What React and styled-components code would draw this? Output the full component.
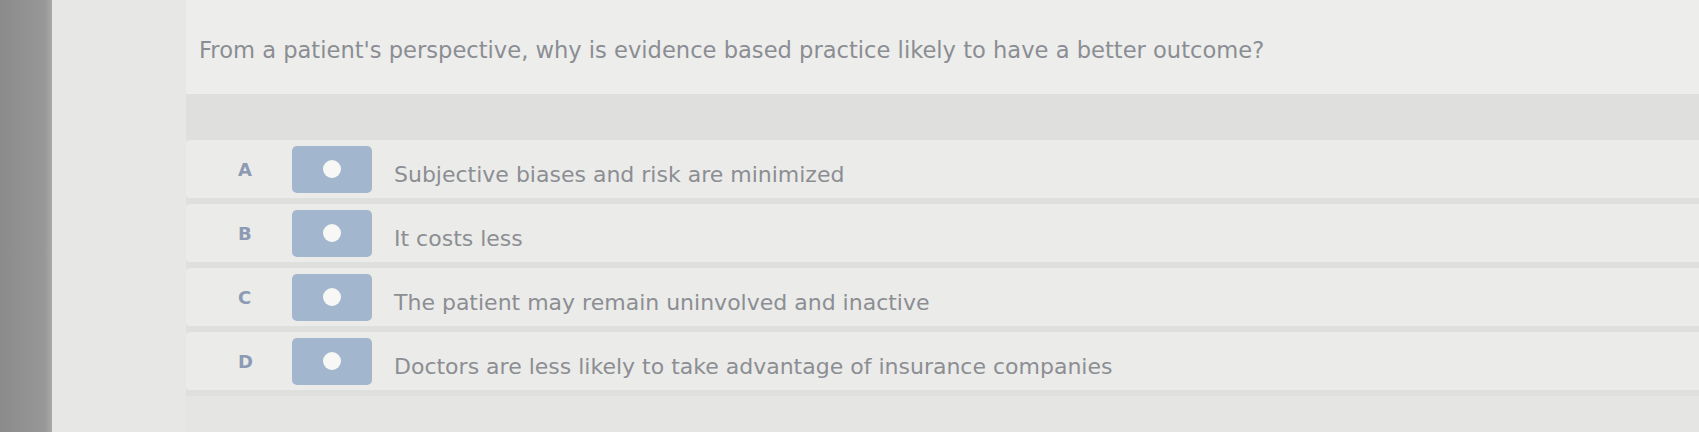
import React from "react";
import styled, { createGlobalStyle } from "styled-components";

const GlobalStyle = createGlobalStyle`
  html, body {
    margin: 0;
    padding: 0;
    background: #e6e6e4;
    font-family: "DejaVu Sans", Verdana, sans-serif;
  }
`;

const Page = styled.div`
  display: flex;
  width: 1699px;
  height: 432px;
  overflow: hidden;
`;

const Sidebar = styled.div`
  width: 52px;
  flex-shrink: 0;
  background: linear-gradient(to right, #8b8b8b, #979797 85%, #a9a9a9);
`;

const Main = styled.div`
  flex: 1;
  display: flex;
  flex-direction: column;
  padding-left: 134px;
  background: #e7e7e5;
`;

const QuestionPanel = styled.div`
  height: 94px;
  display: flex;
  align-items: center;
  padding: 6px 0 0 13px;
  box-sizing: border-box;
  background: #ededeb;
`;

const QuestionText = styled.div`
  font-size: 22.6px;
  color: #8b8d94;
`;

const Spacer = styled.div`
  height: 46px;
  background: #dfdfdd;
`;

const OptionList = styled.div`
  display: flex;
  flex-direction: column;
  gap: 6px;
  background: #dfdfdd;
  padding-bottom: 6px;
`;

const Row = styled.div`
  height: 58px;
  display: flex;
  align-items: center;
  background: #ebebe9;
  border-radius: 4px 0 0 4px;
`;

const Letter = styled.div`
  width: 106px;
  padding-left: 52px;
  box-sizing: border-box;
  font-size: 18px;
  font-weight: bold;
  color: #8d9ab4;
`;

const Toggle = styled.div`
  width: 80px;
  height: 47px;
  border-radius: 5px;
  background: #a2b7cd;
  display: flex;
  align-items: center;
  justify-content: center;
  flex-shrink: 0;
`;

const Dot = styled.div`
  width: 18px;
  height: 18px;
  border-radius: 50%;
  background: #f7f7f6;
`;

const OptionText = styled.div`
  margin-left: 22px;
  padding-top: 10px;
  font-size: 22px;
  color: #8c8e93;
`;

const Bottom = styled.div`
  flex: 1;
  background: #e5e5e3;
`;

const options = [
  ["A", "Subjective biases and risk are minimized"],
  ["B", "It costs less"],
  ["C", "The patient may remain uninvolved and inactive"],
  ["D", "Doctors are less likely to take advantage of insurance companies"],
];

export default function App() {
  return (
    <Page>
      <GlobalStyle />
      <Sidebar />
      <Main>
        <QuestionPanel>
          <QuestionText>
            From a patient's perspective, why is evidence based practice likely
            to have a better outcome?
          </QuestionText>
        </QuestionPanel>
        <Spacer />
        <OptionList>
          {options.map(([letter, text]) => (
            <Row key={letter}>
              <Letter>{letter}</Letter>
              <Toggle>
                <Dot />
              </Toggle>
              <OptionText>{text}</OptionText>
            </Row>
          ))}
        </OptionList>
        <Bottom />
      </Main>
    </Page>
  );
}
